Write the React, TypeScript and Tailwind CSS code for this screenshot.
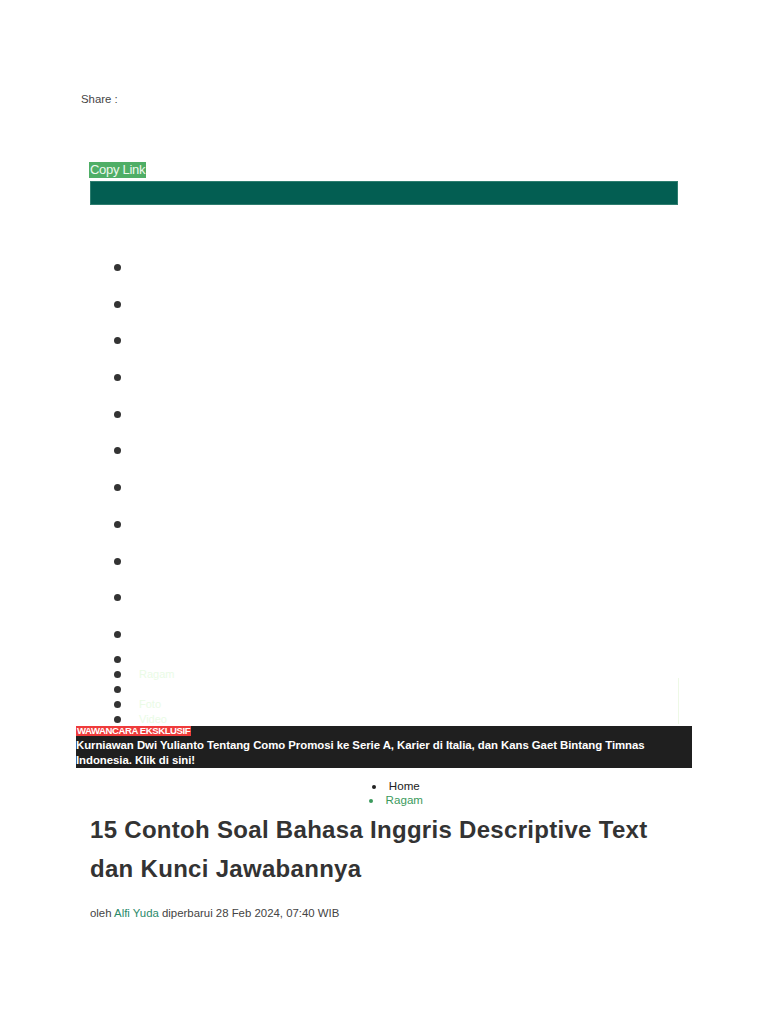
import React from 'react';

const emptyItems = Array.from({ length: 11 });

export default function App() {
  return (
    <div className="min-h-[1024px] w-[768px] bg-white font-['Liberation_Sans',Arial,sans-serif] text-[#333]">
      {/* Share */}
      <div className="px-[81px] pt-[91px]">
        <p className="text-[11.4px] leading-[16px] text-[#444]">Share :</p>
      </div>

      {/* Copy link + bar */}
      <div className="pl-[89px] pr-[90px] pt-[50px]">
        <span className="inline-block bg-[#4fae66] px-px text-[13px] leading-[16px] tracking-[-0.3px] text-[#eef8ee]">
          Copy Link
        </span>
        <div className="ml-px h-[24px] border border-[#2e7d6f] bg-[#035e52]" />
      </div>

      {/* Menu list */}
      <ul className="list-disc pl-[134px] pt-[54px] text-[16px] leading-[16px] text-[#222] marker:text-[22px] marker:text-[#333]">
        {emptyItems.map((_, i) => (
          <li key={i} className="h-[36.7px]">
            {'\u00a0'}
          </li>
        ))}
      </ul>

      <div className="relative -mt-[11px]">
        <ul className="list-disc pl-[134px] text-[11px] leading-[14px] text-[#eafbe6] marker:text-[22px] marker:text-[#333]">
          <li className="h-[15px]">{'\u00a0'}</li>
          <li className="h-[15px]">
            <span className="relative -top-[3px] ml-[5px]">Ragam</span>
          </li>
          <li className="h-[15px]">{'\u00a0'}</li>
          <li className="h-[15px]">
            <span className="relative -top-[3px] ml-[5px]">Foto</span>
          </li>
          <li className="h-[15px]">
            <span className="relative -top-[3px] ml-[5px]">Video</span>
          </li>
        </ul>
        <div className="absolute right-[89px] top-[26px] h-[46px] w-px bg-[#eef9e6]" />
      </div>

      {/* Exclusive banner */}
      <div className="relative z-10 mx-[76px] -mt-[1px] bg-[#1f1f1f]">
        <span className="block w-max bg-[#ef3b3b] px-px text-[9.6px] font-bold leading-[10px] tracking-[-0.45px] text-white">
          WAWANCARA EKSKLUSIF
        </span>
        <p className="pt-[2px] text-[11.4px] font-bold leading-[15px] tracking-[-0.05px] text-white">
          Kurniawan Dwi Yulianto Tentang Como Promosi ke Serie A, Karier di Italia, dan Kans Gaet Bintang Timnas
          Indonesia. Klik di sini!
        </p>
      </div>

      {/* Breadcrumb */}
      <ul className="mt-[11px] list-inside list-disc pl-[24px] text-center text-[11.6px] leading-[14px]">
        <li className="text-[#222]">Home</li>
        <li className="text-[#3b9a5d]">Ragam</li>
      </ul>

      {/* Title */}
      <div className="px-[90px] pt-[3px]">
        <h1 className="text-[24px] font-bold leading-[39px] tracking-[0.3px] text-[#333]">
          15 Contoh Soal Bahasa Inggris Descriptive Text dan Kunci Jawabannya
        </h1>
        <p className="pt-[17px] text-[11.4px] leading-[16px] text-[#444]">
          oleh <span className="text-[#2a8a6a]">Alfi Yuda</span> diperbarui 28 Feb 2024, 07:40 WIB
        </p>
      </div>
    </div>
  );
}
